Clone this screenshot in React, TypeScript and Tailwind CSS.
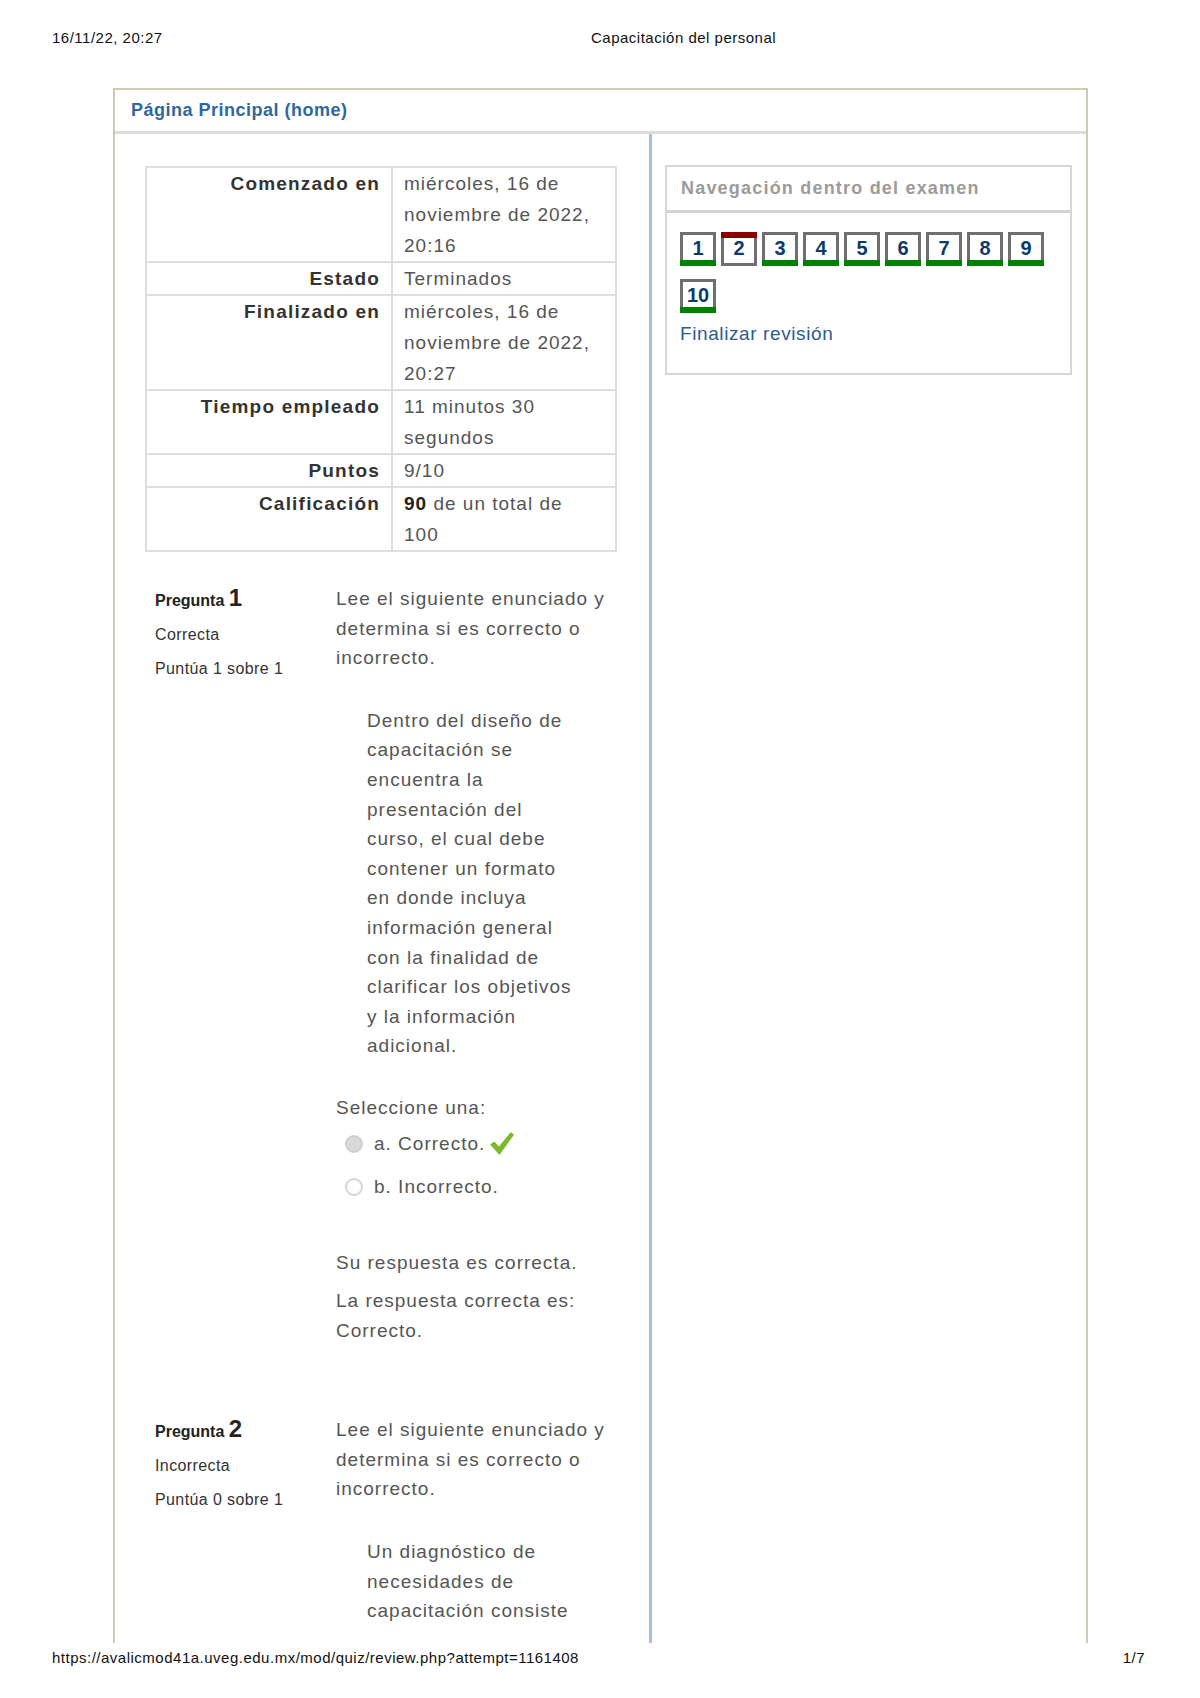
import React from 'react';

const rows: { label: string; value: React.ReactNode }[] = [
  { label: 'Comenzado en', value: 'miércoles, 16 de noviembre de 2022, 20:16' },
  { label: 'Estado', value: 'Terminados' },
  { label: 'Finalizado en', value: 'miércoles, 16 de noviembre de 2022, 20:27' },
  { label: 'Tiempo empleado', value: '11 minutos 30 segundos' },
  { label: 'Puntos', value: '9/10' },
  {
    label: 'Calificación',
    value: (
      <>
        <b className="text-[#222]">90</b> de un total de 100
      </>
    ),
  },
];

function CheckMark() {
  return (
    <svg width="27" height="27" viewBox="0 0 26 26" className="ml-[3px] -mt-[2px]">
      <path d="M2 14 L6 11 L10.5 16 L22 2 L25 4.5 L11 24 Z" fill="#7cb828" />
    </svg>
  );
}

function Radio({ checked }: { checked?: boolean }) {
  return (
    <span
      className={
        checked
          ? 'inline-block w-[18px] h-[18px] rounded-full border-2 border-[#cfcfcf] bg-[#d9d9d9]'
          : 'inline-block w-[18px] h-[18px] rounded-full border-2 border-[#d4d4d4] bg-white'
      }
    />
  );
}

function NavButton({ n, wrong }: { n: number; wrong?: boolean }) {
  return (
    <div className="relative w-[36px] h-[34px] border-[3px] border-[#6f6f6f] bg-white flex items-center justify-center">
      <span className="font-bold text-[20px] leading-none text-[#0d3a6b] -mt-[2px]">{n}</span>
      {wrong ? (
        <span className="absolute -top-[3px] -left-[3px] -right-[3px] h-[6px] bg-[#850000]" />
      ) : (
        <span className="absolute -bottom-[3px] -left-[3px] -right-[3px] h-[6px] bg-[#008000]" />
      )}
    </div>
  );
}

function Question({
  num,
  state,
  score,
  children,
}: {
  num: number;
  state: string;
  score: string;
  children: React.ReactNode;
}) {
  return (
    <div className="flex">
      <div className="w-[191px] pl-[10px] -mt-[3px] text-[16px] leading-[34px] tracking-[0.4px] text-[#333]">
        <div>
          <span className="font-bold text-[16px] tracking-normal text-[#222]">Pregunta </span>
          <span className="font-bold text-[24px] text-[#222]">{num}</span>
        </div>
        <div>{state}</div>
        <div>{score}</div>
      </div>
      <div className="w-[281px] text-[19px] leading-[29.6px] tracking-[1px] text-[#555]">
        <p>Lee el siguiente enunciado y determina si es correcto o incorrecto.</p>
        {children}
      </div>
    </div>
  );
}

export default function App() {
  return (
    <div className="w-[1200px] h-[1698px] bg-white font-['Liberation_Sans',Arial,sans-serif] text-[#222]">
      {/* print header */}
      <div className="flex pt-[29px] h-[88px] text-[15px] leading-[18px] tracking-[0.5px] text-[#111]">
        <div className="w-[591px] pl-[52px]">16/11/22, 20:27</div>
        <div>Capacitación del personal</div>
      </div>

      {/* page box */}
      <div className="ml-[113px] w-[975px] h-[1555px] border-2 border-b-0 border-[#cfcbb1] overflow-hidden flex flex-col">
        <div className="h-[44px] shrink-0 border-b-[3px] border-[#dcdcdc] pl-[16px] flex items-center">
          <span className="font-bold text-[18px] tracking-[0.5px] text-[#2d68a0]">Página Principal (home)</span>
        </div>

        <div className="flex flex-1">
          {/* main column */}
          <div className="w-[537px] shrink-0 border-r-[3px] border-[#9fc1df] pl-[30px] pt-[32px]">
            <table className="w-[472px] border-collapse text-[19px] leading-[31px] tracking-[1px]">
              <tbody>
                {rows.map((r) => (
                  <tr key={r.label}>
                    <td className="w-[246px] border-2 border-[#dedede] pr-[11px] text-right align-top font-bold text-[#333] tracking-[1.2px]">
                      {r.label}
                    </td>
                    <td className="border-2 border-[#dedede] pl-[11px] pr-[22px] align-top text-[#555]">{r.value}</td>
                  </tr>
                ))}
              </tbody>
            </table>

            <div className="mt-[32px]">
              <Question num={1} state="Correcta" score="Puntúa 1 sobre 1">
                <p className="mt-[33px] mx-[31px] w-[211px]">
                  Dentro del diseño de capacitación se encuentra la presentación del curso, el cual debe contener un
                  formato en donde incluya información general con la finalidad de clarificar los objetivos y la
                  información adicional.
                </p>
                <p className="mt-[32px]">Seleccione una:</p>
                <div className="h-[43px] flex items-center pl-[9px]">
                  <Radio checked />
                  <span className="ml-[11px]">a. Correcto.</span>
                  <CheckMark />
                </div>
                <div className="h-[43px] flex items-center pl-[9px]">
                  <Radio />
                  <span className="ml-[11px]">b. Incorrecto.</span>
                </div>
                <p className="mt-[39px]">Su respuesta es correcta.</p>
                <p className="mt-[9px]">La respuesta correcta es: Correcto.</p>
              </Question>
            </div>

            <div className="mt-[70px]">
              <Question num={2} state="Incorrecta" score="Puntúa 0 sobre 1">
                <p className="mt-[33px] mx-[31px] w-[211px]">
                  Un diagnóstico de necesidades de capacitación consiste
                </p>
              </Question>
            </div>
          </div>

          {/* side column */}
          <div className="flex-1 pl-[13px] pr-[14px] pt-[31px]">
            <div className="border-2 border-[#d6d6d6]">
              <div className="h-[46px] border-b-[3px] border-[#d3d3d3] pl-[14px] flex items-center">
                <span className="font-bold text-[18px] tracking-[1.2px] text-[#9b9b9b]">
                  Navegación dentro del examen
                </span>
              </div>
              <div className="pl-[13px] pr-[10px] pt-[19px] pb-[24px]">
                <div className="flex flex-wrap gap-x-[5px] gap-y-[13px]">
                  {[1, 2, 3, 4, 5, 6, 7, 8, 9, 10].map((n) => (
                    <NavButton key={n} n={n} wrong={n === 2} />
                  ))}
                </div>
                <div className="mt-[6px] text-[19px] leading-[29.6px] tracking-[0.6px] text-[#2b5c8d]">
                  Finalizar revisión
                </div>
              </div>
            </div>
          </div>
        </div>
      </div>

      {/* print footer */}
      <div className="flex justify-between mt-[6px] text-[15px] leading-[18px] tracking-[0.5px] text-[#111]">
        <div className="pl-[52px]">https://avalicmod41a.uveg.edu.mx/mod/quiz/review.php?attempt=1161408</div>
        <div className="pr-[55px]">1/7</div>
      </div>
    </div>
  );
}
